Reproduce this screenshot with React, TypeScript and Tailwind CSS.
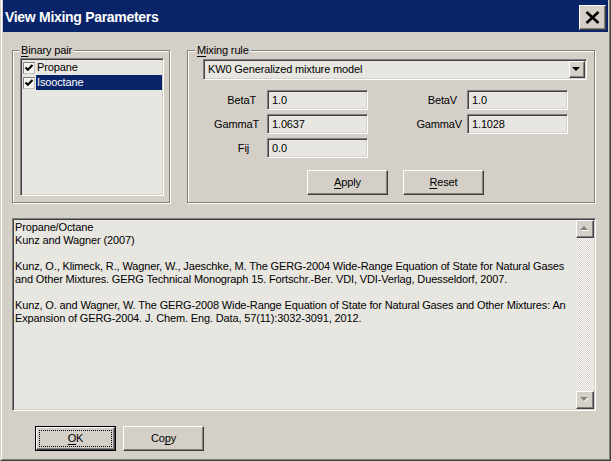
import React from "react";

// Classic Win2000 dialog: "View Mixing Parameters"

const raised =
  "border border-t-white border-l-white border-r-[#404040] border-b-[#404040] bg-[#d4d0c8] shadow-[inset_-1px_-1px_0_#808080]";
const sunken =
  "border border-t-[#808080] border-l-[#808080] border-r-white border-b-white p-[1px] shadow-[inset_1px_1px_0_#404040,inset_-1px_-1px_0_#d4d0c8]";
const fieldBg = "bg-[#e8e6e1]";

function Key({ children }: { children: React.ReactNode }) {
  return <u className="underline underline-offset-[2px]">{children}</u>;
}

function Button({
  children,
  isDefault = false,
}: {
  children: React.ReactNode;
  isDefault?: boolean;
}) {
  if (isDefault) {
    return (
      <div className="h-[25px] w-[81px] border border-black">
        <div className={`${raised} flex h-full w-full p-[2px]`}>
          <div className="flex flex-1 items-center justify-center border border-dotted border-black">
            {children}
          </div>
        </div>
      </div>
    );
  }
  return (
    <div className={`${raised} flex h-[25px] w-[81px] items-center justify-center`}>
      {children}
    </div>
  );
}

function CheckBox() {
  return (
    <div className="h-[12px] w-[12px] shrink-0 border border-t-[#808080] border-l-[#808080] border-r-[#c0c0c0] border-b-[#c0c0c0] bg-[#f4f3f0]">
      <svg width="10" height="10" viewBox="0 0 10 10">
        <path d="M1.5 4.5 L3.8 6.8 L8.5 2" stroke="#000" strokeWidth="2" fill="none" />
      </svg>
    </div>
  );
}

function Arrow({ down = false, disabled = false }: { down?: boolean; disabled?: boolean }) {
  const pts = down ? "0,0 8,0 4,4" : "4,0 8,4 0,4";
  return (
    <svg width="10" height="6" viewBox="0 0 10 6">
      {disabled && <polygon points={pts} fill="#fff" transform="translate(1 1)" />}
      <polygon points={pts} fill={disabled ? "#808080" : "#000"} />
    </svg>
  );
}

function Field({
  label,
  labelW,
  pr,
  value,
}: {
  label: string;
  labelW: string;
  pr: string;
  value: string;
}) {
  return (
    <>
      <div className={`${labelW} ${pr} shrink-0 text-right`}>{label}</div>
      <div className={`${sunken} ${fieldBg} ml-[5px] flex h-[20px] w-[101px] shrink-0 items-center`}>
        <span className="pl-[3px]">{value}</span>
      </div>
    </>
  );
}

const refs = [
  "Propane/Octane",
  "Kunz and Wagner (2007)",
  "",
  "Kunz, O., Klimeck, R., Wagner, W., Jaeschke, M. The GERG-2004 Wide-Range Equation of State for Natural Gases",
  "and Other Mixtures. GERG Technical Monograph 15. Fortschr.-Ber. VDI, VDI-Verlag, Duesseldorf, 2007.",
  "",
  "Kunz, O. and Wagner, W. The GERG-2008 Wide-Range Equation of State for Natural Gases and Other Mixtures: An",
  "Expansion of GERG-2004. J. Chem. Eng. Data, 57(11):3032-3091, 2012.",
];

export default function App() {
  return (
    <div className="h-[461px] w-[611px] font-['Liberation_Sans',Arial,sans-serif] text-[11px] tracking-[-0.14px] text-black">
      <div className="h-full w-full border-l border-r border-b border-l-[#d4d0c8] border-r-[#404040] border-b-[#404040] bg-[#d4d0c8]">
        <div className="flex h-full w-full flex-col border-l border-r border-b border-l-white border-r-[#808080] border-b-[#808080] px-[1px] pb-[1px]">
          {/* title bar */}
          <div className="flex h-[32px] shrink-0 items-center justify-between bg-[#0a246a] pl-[2px] pr-[2px]">
            <span className="pt-[3px] text-[14px] font-bold tracking-[-0.3px] text-white">
              View Mixing Parameters
            </span>
            <div className={`${raised} mt-[2px] flex h-[25px] w-[27px] items-center justify-center`}>
              <svg width="15" height="13" viewBox="0 0 15 13">
                <path d="M1.5 1 L13.5 12 M13.5 1 L1.5 12" stroke="#000" strokeWidth="2.6" />
              </svg>
            </div>
          </div>

          {/* body */}
          <div className="flex flex-1 flex-col pl-[9px] pt-[11px]">
            <div className="flex gap-[17px]">
              <fieldset className="m-0 w-[158px] min-w-0 border border-[#808080] p-0 shadow-[inset_1px_1px_0_#fff,1px_1px_0_#fff]">
                <legend className="ml-[6px] bg-[#d4d0c8] px-[2px] leading-[14px]">
                  <Key>B</Key>inary pair
                </legend>
                <div className="pl-[7px] pt-[1px] pb-[6px]">
                  <div className={`${sunken} ${fieldBg} h-[138px] w-[144px]`}>
                    <div className="flex h-[15px] items-center">
                      <div className="ml-[1px]">
                        <CheckBox />
                      </div>
                      <div className="ml-[1px] flex h-[15px] flex-1 items-center pl-[1px]">Propane</div>
                    </div>
                    <div className="flex h-[15px] items-center">
                      <div className="ml-[1px]">
                        <CheckBox />
                      </div>
                      <div className="ml-[1px] flex h-[15px] flex-1 items-center bg-[#0a246a] pl-[1px] text-white">
                        Isooctane
                      </div>
                    </div>
                  </div>
                </div>
              </fieldset>

              <fieldset className="m-0 w-[408px] min-w-0 border border-[#808080] p-0 shadow-[inset_1px_1px_0_#fff,1px_1px_0_#fff]">
                <legend className="ml-[7px] bg-[#d4d0c8] px-[2px] leading-[14px]">
                  <Key>M</Key>ixing rule
                </legend>
                <div className="pl-[15px] pr-[7px] pt-[2px] pb-[7px]">
                  <div className={`${sunken} ${fieldBg} flex h-[21px] w-[384px]`}>
                    <div className="flex flex-1 items-center pl-[3px]">KW0 Generalized mixture model</div>
                    <div className={`${raised} flex h-[17px] w-[16px] items-center justify-center`}>
                      <Arrow down />
                    </div>
                  </div>

                  <div className="mt-[10px] flex flex-col gap-[4px]">
                    <div className="flex items-center">
                      <Field label="BetaT" labelW="w-[59px]" pr="pr-[6px]" value="1.0" />
                      <Field label="BetaV" labelW="w-[94px]" pr="pr-[5px]" value="1.0" />
                    </div>
                    <div className="flex items-center">
                      <Field label="GammaT" labelW="w-[59px]" pr="pr-[3px]" value="1.0637" />
                      <Field label="GammaV" labelW="w-[94px]" pr="pr-[0px]" value="1.1028" />
                    </div>
                    <div className="flex items-center">
                      <Field label="Fij" labelW="w-[59px]" pr="pr-[13px]" value="0.0" />
                    </div>
                  </div>

                  <div className="ml-[104px] mt-[12px] flex gap-[15px]">
                    <Button>
                      <span>
                        <Key>A</Key>pply
                      </span>
                    </Button>
                    <Button>
                      <span>
                        <Key>R</Key>eset
                      </span>
                    </Button>
                  </div>
                </div>
              </fieldset>
            </div>

            {/* references */}
            <div className={`${sunken} ${fieldBg} mt-[15px] flex h-[193px] w-[584px]`}>
              <div className="flex-1 pl-[1px] pt-[1px] leading-[13px]">
                {refs.map((l, i) => (
                  <div key={i} className="h-[13px] whitespace-nowrap">
                    {l}
                  </div>
                ))}
              </div>
              <div className="flex w-[18px] flex-col">
                <div className={`${raised} flex h-[18px] items-center justify-center`}>
                  <Arrow disabled />
                </div>
                <div className="flex-1 bg-[repeating-conic-gradient(#d4d0c8_0%_25%,#ffffff_0%_50%)] bg-size-[2px_2px]" />
                <div className={`${raised} flex h-[18px] items-center justify-center`}>
                  <Arrow down disabled />
                </div>
              </div>
            </div>

            <div className="ml-[23px] mt-[15px] flex gap-[7px]">
              <Button isDefault>
                <span>
                  <Key>O</Key>K
                </span>
              </Button>
              <Button>
                <span>
                  Co<Key>p</Key>y
                </span>
              </Button>
            </div>
          </div>
        </div>
      </div>
    </div>
  );
}
